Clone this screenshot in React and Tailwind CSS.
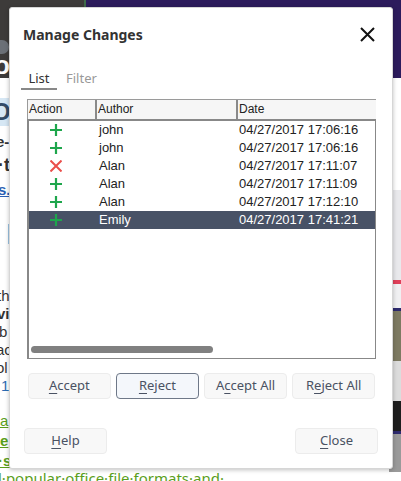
import React from 'react';

const rows = [
  { action: 'add', author: 'john', date: '04/27/2017 17:06:16' },
  { action: 'add', author: 'john', date: '04/27/2017 17:06:16' },
  { action: 'del', author: 'Alan', date: '04/27/2017 17:11:07' },
  { action: 'add', author: 'Alan', date: '04/27/2017 17:11:09' },
  { action: 'add', author: 'Alan', date: '04/27/2017 17:12:10' },
  { action: 'add', author: 'Emily', date: '04/27/2017 17:41:21', selected: true },
];

const Plus = () => (
  <svg width="12" height="12" viewBox="0 0 12 12">
    <path d="M6 0V12M0 6H12" stroke="#1ea64c" strokeWidth="2.2" />
  </svg>
);

const Cross = () => (
  <svg width="12" height="12" viewBox="0 0 12 12">
    <path d="M0.5 0.5L11.5 11.5M11.5 0.5L0.5 11.5" stroke="#ea4f4b" strokeWidth="2" />
  </svg>
);

const Btn = ({ children, active }) => (
  <button
    className={
      active
        ? 'h-[26px] rounded-[4px] border border-[#6e7888] bg-[#f4f7fb] text-[13px] text-[#4a5263]'
        : 'h-[26px] rounded-[4px] border border-[#ececec] bg-[#f8f8f8] text-[13px] text-[#4a5263]'
    }
  >
    {children}
  </button>
);

const U = ({ children }) => <span className="underline underline-offset-[3px]">{children}</span>;

export default function App() {
  return (
    <div className="relative w-[401px] h-[481px] overflow-hidden bg-white font-['Liberation_Sans',sans-serif]">
      {/* document behind the dialog */}
      <div className="flex flex-col h-full">
        <div className="h-[78px] flex shrink-0">
          <div className="w-[84px] bg-[#3d3b3a] flex flex-col pt-[40px] pl-0">
            <div className="w-[9px] h-[14px] bg-[#6b7077] rounded-r-full"></div>
            <span className="text-white font-bold text-[26px] leading-[22px] -ml-[6px]">o</span>
          </div>
          <div className="w-[2px] bg-[#3f6b4a]"></div>
          <div className="flex-1 bg-[#2c1b5c]"></div>
        </div>
        <div className="flex flex-1">
          <div className="w-[40px] flex flex-col text-[15px] leading-[18px] text-[#333]">
            <div className="h-[20px]"></div>
            <div className="h-[28px] bg-[#d6e7f4] text-[#334a66] font-bold text-[24px] leading-[28px] -ml-[8px]">O</div>
            <div className="h-[7px]"></div>
            <div className="h-[18px] font-bold -ml-[4px]">e-</div>
            <div className="h-[5px]"></div>
            <div className="h-[18px] font-bold text-[18px] -ml-[2px]">·t</div>
            <div className="h-[7px]"></div>
            <div className="h-[18px] font-bold text-[#2b5fb3] underline -ml-[2px]">s.</div>
            <div className="h-[25px]"></div>
            <div className="h-[20px] w-[10px] border-r-2 border-[#9cc4e4]"></div>
            <div className="h-[43px]"></div>
            <div className="h-[18px] -ml-[3px]">th</div>
            <div className="h-[18px] font-bold -ml-[3px]">vi</div>
            <div className="h-[18px] -ml-[1px]">b</div>
            <div className="h-[18px] -ml-[4px]">ac</div>
            <div className="h-[18px] -ml-[4px]">ol</div>
            <div className="h-[18px] text-[#2b6cb3] -ml-[4px]">·1</div>
            <div className="h-[17px]"></div>
            <div className="h-[20px] text-[#5a9e1b] underline">a</div>
            <div className="h-[20px] font-bold text-[#5a9e1b] underline">e</div>
            <div className="h-[20px] font-bold text-[#5a9e1b] underline -ml-[2px]">·s</div>
          </div>
          <div className="flex-1"></div>
          <div className="w-[12px] flex flex-col">
            <div className="h-[112px]"></div>
            <div className="h-[90px] bg-[#e9e9ec]"></div>
            <div className="h-[4px] bg-[#e0405a]"></div>
            <div className="h-[24px] bg-[#f0f0f2]"></div>
            <div className="h-[3px] bg-[#2d2a6e]"></div>
            <div className="h-[50px] bg-[#7d7a62]"></div>
            <div className="h-[40px] bg-[#dcdcdc]"></div>
            <div className="h-[30px] bg-[#1e1e1e]"></div>
            <div className="h-[3px] bg-[#2d2a6e]"></div>
            <div className="flex-1 bg-[#9a9a9a]"></div>
          </div>
        </div>
        <div className="h-[12px] shrink-0 text-[15px] leading-[12px] text-[#5a9e1b] underline whitespace-nowrap font-['Noto_Sans',sans-serif] -ml-[2px]">
          l·popular·office·file·formats·and·
        </div>
      </div>

      {/* dialog */}
      <div className="absolute left-[9px] top-[7px] w-[384px] h-[462px] bg-white border border-[#d6d6d6] rounded-[3px] shadow-[0_1px_4px_rgba(0,0,0,0.25)] flex flex-col font-['Noto_Sans',sans-serif]">
        <div className="flex items-center justify-between pl-[13px] pr-[17px] h-[52px]">
          <span className="text-[14px] font-bold text-[#333]">Manage Changes</span>
          <svg width="15" height="15" viewBox="0 0 15 15">
            <path d="M1 1L14 14M14 1L1 14" stroke="#111" strokeWidth="2" />
          </svg>
        </div>
        <div className="flex pl-[11px] pt-[8px]">
          <div className="w-[36px] border-b-2 border-[#888] text-[13px] text-[#333] text-center leading-[20px]">List</div>
          <div className="ml-[9px] text-[13px] text-[#999] leading-[20px]">Filter</div>
        </div>
        <div className="ml-[17px] mt-[9px] w-[349px] flex flex-col font-['Liberation_Sans',sans-serif]">
          <div className="flex h-[20px] border-t border-l border-[#9a9a9a] bg-[#f6f6f6] text-[12px] text-[#222] leading-[18px]">
            <div className="w-[69px] border-r-2 border-[#8a8a8a] pl-[1px]">Action</div>
            <div className="w-[141px] border-r-2 border-[#8a8a8a] pl-[1px]">Author</div>
            <div className="flex-1 pl-[1px]">Date</div>
          </div>
          <div className="relative h-[240px] border-t-2 border-l-2 border-r border-b border-[#888] text-[13px] text-[#222]">
            {rows.map((r, i) => (
              <div
                key={i}
                className={
                  r.selected
                    ? 'flex h-[18px] items-center bg-[#485266] text-white'
                    : 'flex h-[18px] items-center'
                }
              >
                <div className="w-[68px] flex pl-[21px]">
                  {r.action === 'add' ? <Plus /> : <Cross />}
                </div>
                <div className="w-[141px] pl-[2px]">{r.author}</div>
                <div className="flex-1 pl-[1px]">{r.date}</div>
              </div>
            ))}
            <div className="absolute left-[2px] bottom-[5px] w-[182px] h-[7px] rounded-full bg-[#808080]"></div>
          </div>
        </div>
        <div className="ml-[18px] mt-[14px] w-[347px] grid grid-cols-4 gap-[5.5px]">
          <Btn><U>A</U>ccept</Btn>
          <Btn active><U>R</U>eject</Btn>
          <Btn>A<U>c</U>cept All</Btn>
          <Btn>R<U>e</U>ject All</Btn>
        </div>
        <div className="flex-1"></div>
        <div className="flex justify-between pl-[14px] pr-[14px] pb-[14px]">
          <div className="w-[83px] grid"><Btn><U>H</U>elp</Btn></div>
          <div className="w-[83px] grid"><Btn><U>C</U>lose</Btn></div>
        </div>
      </div>
    </div>
  );
}
